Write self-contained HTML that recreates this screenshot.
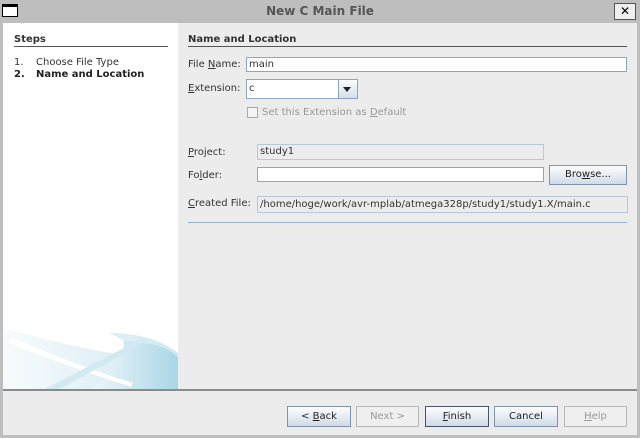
<!DOCTYPE html><html><head><style>
*{margin:0;padding:0;box-sizing:border-box}
body{width:640px;height:438px;background:#bebebe;font-family:"DejaVu Sans",sans-serif;font-size:10px;color:#333;position:relative;overflow:hidden}
.a{position:absolute}
.t{white-space:nowrap}
.f{background:#fff;border:1px solid #8ea4bf}
.ro{background:#ececec;border:1px solid #b8c8da}
.btn{position:absolute;height:21px;border:1px solid #7f94aa;background:linear-gradient(#fdfdfe,#cfdbe8);text-align:center;line-height:19px;font-size:10px;color:#222}
.dis{border-color:#b8b8b8;background:#efefef;color:#999}
u{text-decoration:underline}
</style></head><body>
<div class="a" style="left:2px;top:4px;width:16px;height:13px;border:1px solid #000;border-top:3px solid #000;background:#fff"></div>
<div class="a t" style="left:0;width:640px;top:4px;text-align:center;font-weight:bold;font-size:12px;color:#555">New C Main File</div>
<div class="a" style="left:614px;top:3px;width:22px;height:17px;border:1px solid #555;background:#eee;font-weight:bold;font-size:12px;text-align:center;line-height:15px;color:#000">✕</div>
<div class="a" style="left:3px;top:23px;width:634px;height:412px;background:#ececec"></div>
<div class="a" style="left:3px;top:23px;width:175px;height:367px;background:#fff;overflow:hidden">
<svg width="175" height="367" style="position:absolute;left:0;top:0">
<defs><linearGradient id="g" x1="0" x2="1"><stop offset="0" stop-color="#f2f8fb"/><stop offset="1" stop-color="#a9d6e6"/></linearGradient></defs>
<path d="M0 305 Q90 330 145 335 Q120 315 105 310 Q150 310 175 330 L175 367 L0 367Z" fill="url(#g)" opacity=".55"/>
<path d="M120 318 Q165 320 175 335 L175 367 L85 367 Q125 345 120 318Z" fill="url(#g)"/>
<path d="M10 315 Q80 345 130 360 L128 364 Q70 345 5 320Z" fill="#fff"/>
<path d="M140 315 L40 367 L55 367 L145 318Z" fill="#d3e9f2"/>
</svg>
</div>
<div class="a t" style="left:14px;top:34px;font-weight:bold">Steps</div>
<div class="a" style="left:14px;top:46px;width:154px;height:1px;background:#555"></div>
<div class="a t" style="left:14px;top:57px">1.</div><div class="a t" style="left:36px;top:57px">Choose File Type</div>
<div class="a t" style="left:14px;top:69px;font-weight:bold;color:#222">2.</div><div class="a t" style="left:36px;top:69px;font-weight:bold;color:#222">Name and Location</div>
<div class="a t" style="left:188px;top:34px;font-weight:bold">Name and Location</div>
<div class="a" style="left:188px;top:46px;width:439px;height:1px;background:#555"></div>
<div class="a t" style="left:188px;top:59px">File <u>N</u>ame:</div>
<div class="a f t" style="left:246px;top:57px;width:381px;height:15px;padding-left:2px;line-height:13px">main</div>
<div class="a t" style="left:188px;top:83px"><u>E</u>xtension:</div>
<div class="a f t" style="left:246px;top:79px;width:112px;height:20px;padding-left:2px;line-height:18px">c</div>
<div class="a" style="left:338px;top:80px;width:19px;height:18px;border-left:1px solid #8ea4bf;background:linear-gradient(#fbfcfd,#d4dfea)"></div>
<div class="a" style="left:343px;top:87px;width:0;height:0;border:4px solid transparent;border-top:5px solid #222;border-bottom:0"></div>
<div class="a" style="left:247px;top:107px;width:11px;height:11px;border:1px solid #aaa;background:#f4f4f4"></div>
<div class="a t" style="left:262px;top:107px;color:#999">Set this Extension as <u>D</u>efault</div>
<div class="a t" style="left:188px;top:147px"><u>P</u>roject:</div>
<div class="a ro t" style="left:257px;top:144px;width:287px;height:16px;padding-left:2px;line-height:14px">study1</div>
<div class="a t" style="left:188px;top:170px">Fo<u>l</u>der:</div>
<div class="a f" style="left:257px;top:167px;width:287px;height:15px"></div>
<div class="btn" style="left:549px;top:165px;width:78px;height:20px;line-height:18px">Bro<u>w</u>se...</div>
<div class="a t" style="left:188px;top:198px"><u>C</u>reated File:</div>
<div class="a ro t" style="left:257px;top:196px;width:371px;height:17px;padding-left:2px;line-height:15px">/home/hoge/work/avr-mplab/atmega328p/study1/study1.X/main.c</div>
<div class="a" style="left:188px;top:222px;width:439px;height:1px;background:#98b0cc"></div>
<div class="a" style="left:3px;top:389px;width:634px;height:2px;background:#8a8a8a"></div>
<div class="btn" style="left:287px;top:406px;width:64px">&lt; <u>B</u>ack</div>
<div class="btn dis" style="left:356px;top:406px;width:63px">Next &gt;</div>
<div class="btn" style="left:425px;top:406px;width:64px;border-color:#445566"><u>F</u>inish</div>
<div class="btn" style="left:494px;top:406px;width:64px">Cancel</div>
<div class="btn dis" style="left:564px;top:406px;width:63px"><u>H</u>elp</div>
</body></html>
